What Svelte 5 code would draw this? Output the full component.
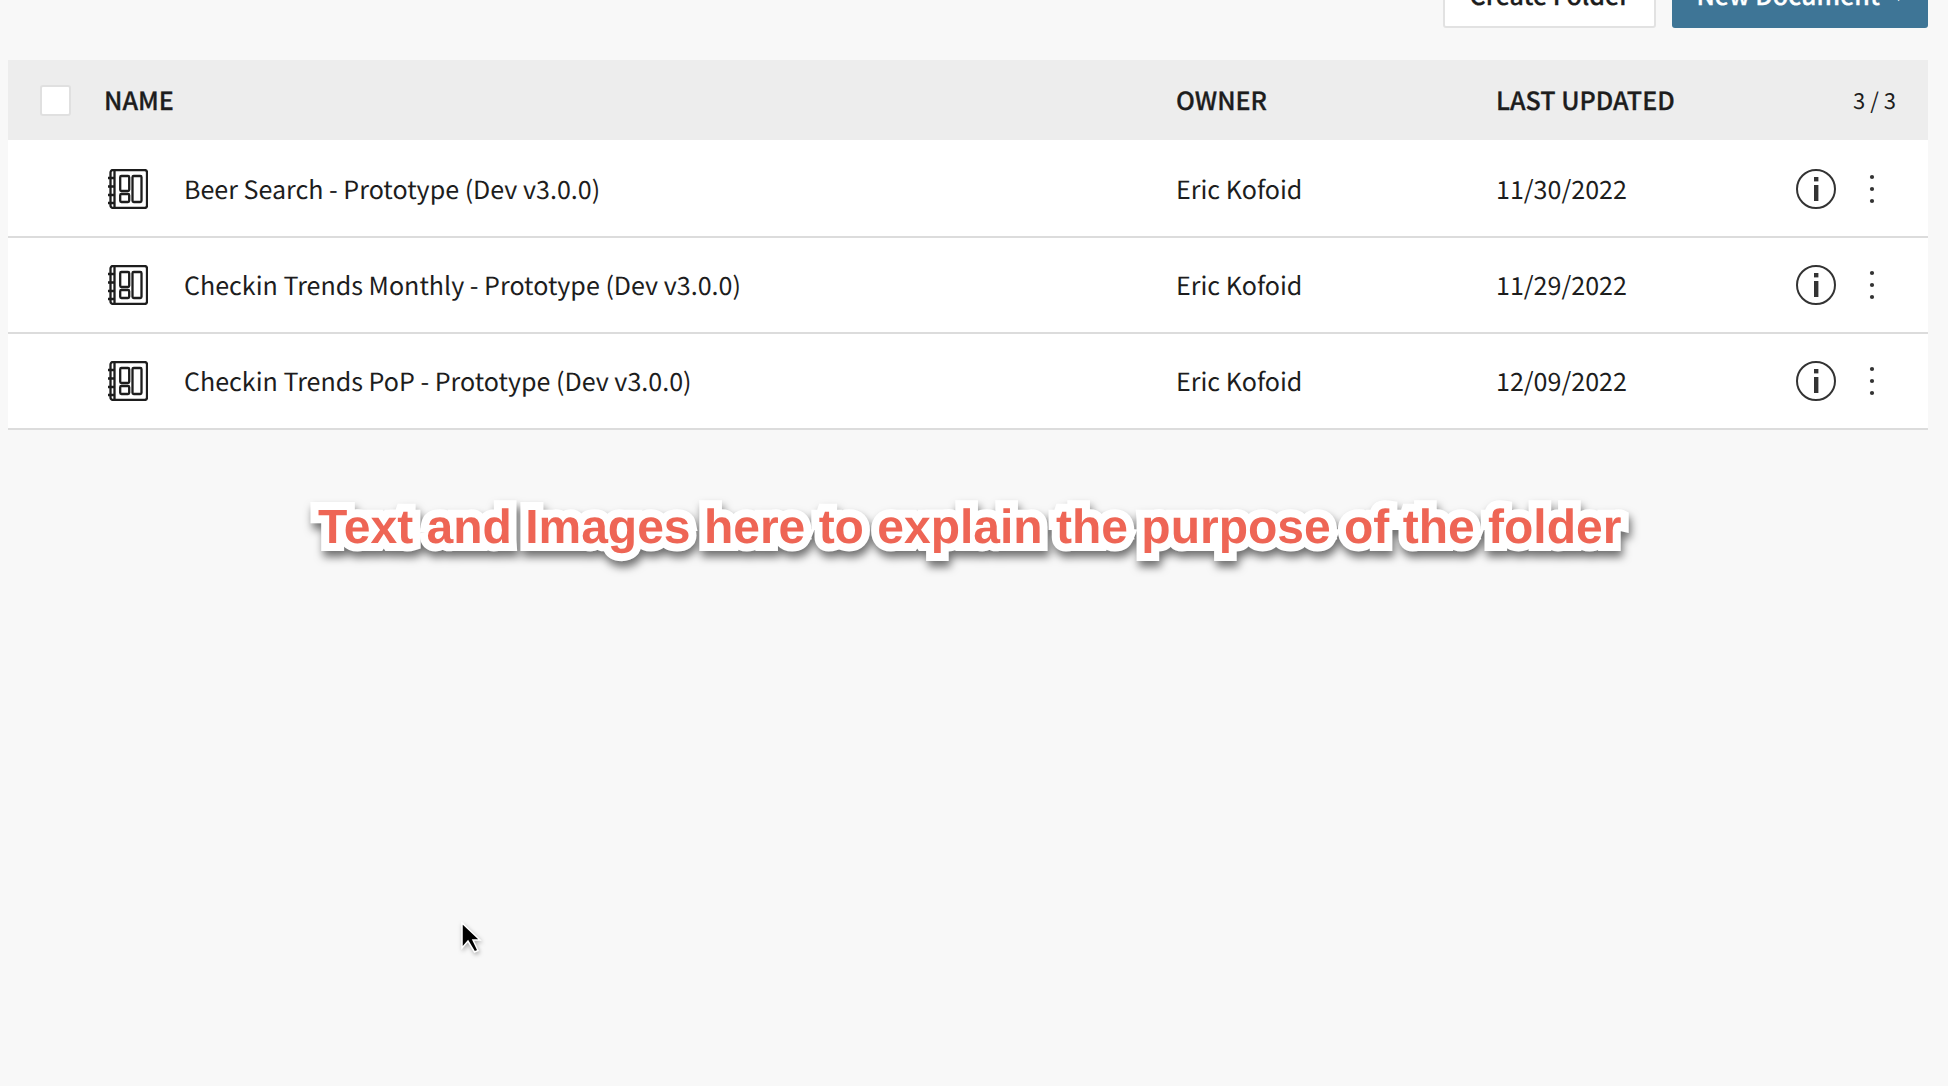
<script lang="ts">
  const docs = [
    { name: "Beer Search - Prototype (Dev v3.0.0)", owner: "Eric Kofoid", updated: "11/30/2022" },
    { name: "Checkin Trends Monthly - Prototype (Dev v3.0.0)", owner: "Eric Kofoid", updated: "11/29/2022" },
    { name: "Checkin Trends PoP - Prototype (Dev v3.0.0)", owner: "Eric Kofoid", updated: "12/09/2022" }
  ];
</script>

<div class="page">
  <div class="toolbar">
    <button class="btn create">Create Folder</button>
    <button class="btn primary">New Document <span class="caret">▾</span></button>
  </div>

  <div class="table">
    <div class="row head">
      <div class="check-cell"><span class="checkbox"></span></div>
      <div class="name-cell">NAME</div>
      <div class="owner-cell">OWNER</div>
      <div class="date-cell">LAST UPDATED</div>
      <div class="count">3 / 3</div>
    </div>

    {#each docs as doc}
      <div class="row item">
        <div class="check-cell"></div>
        <div class="name-cell doc-name">
          <svg class="doc-icon" viewBox="0 0 40 40" fill="none" stroke="#1d1d1d" stroke-width="2.3">
            <rect x="2.5" y="1" width="36.5" height="38" rx="2.5" />
            <path d="M6.5 1v38M0 9h6.5M0 17.5h6.5M0 26h6.5M0 34h6.5" />
            <rect x="12.2" y="7" width="9" height="15" rx="1.2" />
            <rect x="12.2" y="25" width="9" height="8" rx="1.2" />
            <rect x="24.5" y="7" width="9" height="26" rx="1.2" />
          </svg>
          <span>{doc.name}</span>
        </div>
        <div class="owner-cell">{doc.owner}</div>
        <div class="date-cell">{doc.updated}</div>
        <div class="actions">
          <svg class="info" viewBox="0 0 40 40">
            <circle cx="20" cy="20" r="19" fill="none" stroke="#333" stroke-width="2" />
            <rect x="18" y="8" width="4.4" height="4.4" fill="#333" />
            <rect x="18" y="16" width="4.4" height="16" fill="#333" />
          </svg>
          <svg class="kebab" viewBox="0 0 8 30">
            <circle cx="4" cy="3" r="2.1" fill="#333" />
            <circle cx="4" cy="15" r="2.1" fill="#333" />
            <circle cx="4" cy="27" r="2.1" fill="#333" />
          </svg>
        </div>
      </div>
    {/each}
  </div>

  <div class="note">Text and Images here to explain the purpose of the folder</div>

  <svg class="cursor" viewBox="0 0 26 38">
    <path d="M2 3 L2 28 L8 21 L14.5 32 L18 30.5 L13 20 L20 20 Z" fill="#000" stroke="#fff" stroke-width="1.5" />
  </svg>
</div>

<style>
  :global(body) {
    margin: 0;
    background: #f8f8f8;
  }

  .page {
    position: relative;
    height: 1086px;
    overflow: hidden;
    background: #f8f8f8;
    font-family: "Noto Sans CJK SC", "Noto Sans", sans-serif;
    color: #1d1d1d;
    text-rendering: geometricPrecision;
  }

  .toolbar {
    display: flex;
    justify-content: flex-end;
    align-items: flex-end;
    gap: 16px;
    height: 28px;
    padding-right: 20px;
    overflow: hidden;
  }

  .btn {
    flex: none;
    height: 66px;
    border-radius: 3px;
    font-family: inherit;
    font-size: 25px;
    font-weight: 500;
    -webkit-text-stroke: 0.3px currentColor;
    text-rendering: inherit;
    box-sizing: border-box;
  }

  .create {
    width: 213px;
    background: #fff;
    border: 2px solid #e2e2e2;
    color: #1d1d1d;
  }

  .primary {
    width: 256px;
    padding-right: 8px;
    background: #3e7596;
    border: none;
    color: #fff;
  }

  .caret {
    font-size: 12px;
    margin-left: 10px;
    vertical-align: 4px;
  }

  .table {
    margin: 32px 20px 0 8px;
  }

  .row {
    display: flex;
    align-items: center;
    font-size: 25.05px;
  }

  .head {
    height: 80px;
    box-sizing: border-box;
    background: #ededed;
    font-weight: 500;
    -webkit-text-stroke: 0.3px currentColor;
  }

  .item {
    height: 96px;
    box-sizing: border-box;
    background: #fff;
    border-bottom: 2px solid #dcdcdc;
  }

  .head + .item {
    height: 98px;
    padding-top: 2px;
  }

  .check-cell {
    flex: none;
    width: 96px;
    padding-left: 32px;
    box-sizing: border-box;
  }

  .checkbox {
    display: block;
    width: 31px;
    height: 31px;
    box-sizing: border-box;
    background: #fff;
    border: 2px solid #e0e0e0;
    border-radius: 3px;
  }

  .name-cell {
    flex: none;
    width: 1072px;
  }

  .doc-name {
    display: flex;
    align-items: center;
    gap: 36px;
  }

  .doc-icon {
    flex: none;
    width: 40px;
    height: 40px;
    margin-left: 4px;
  }

  .owner-cell {
    flex: none;
    width: 320px;
  }

  .date-cell {
    flex: none;
    width: 300px;
  }

  .count {
    flex: 1;
    text-align: right;
    padding-right: 32px;
    font-size: 22px;
    font-weight: 400;
    margin-left: -20px;
    -webkit-text-stroke: 0;
  }

  .actions {
    flex: 1;
    display: flex;
    align-items: center;
    gap: 32px;
  }

  .info {
    width: 40px;
    height: 40px;
  }

  .kebab {
    width: 8px;
    height: 30px;
  }

  .note {
    position: absolute;
    left: 318px;
    top: 496px;
    white-space: nowrap;
    font-family: "Liberation Sans", Arial, sans-serif;
    font-size: 48px;
    font-weight: 700;
    line-height: 64px;
    color: #ee6555;
    -webkit-text-stroke: 16px #fff;
    paint-order: stroke fill;
    stroke-linejoin: round;
    filter: drop-shadow(2px 6px 4px rgba(0, 0, 0, 0.55));
  }

  .cursor {
    position: absolute;
    left: 460px;
    top: 920px;
    width: 26px;
    height: 38px;
    filter: drop-shadow(1px 2px 2px rgba(0, 0, 0, 0.3));
  }
</style>
